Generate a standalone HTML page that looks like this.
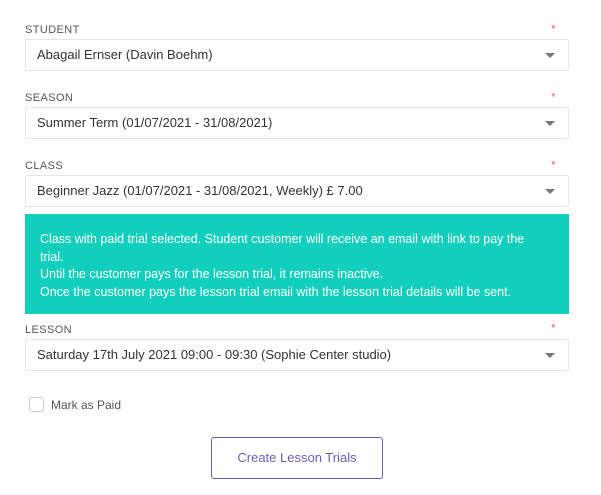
<!DOCTYPE html><html><head><style>
body{margin:0;background:#fff;font-family:"Liberation Sans",sans-serif;width:601px;height:495px;position:relative;overflow:hidden}
.lab{position:absolute;left:25px;font-size:11px;color:#555;letter-spacing:.4px}
.star{position:absolute;left:551px;color:#f06a6a;font-size:12px}
.box{position:absolute;left:25px;width:542px;height:30px;border:1px solid #e6e6e6;border-radius:2px;font-size:13px;color:#333;line-height:30px;text-indent:11px}
.box:after{content:"";position:absolute;right:13px;top:13px;border-left:5px solid transparent;border-right:5px solid transparent;border-top:5px solid #777}
.info{position:absolute;left:25px;top:214px;width:499px;height:83px;background:#12cfbd;color:#fff;font-size:12.5px;line-height:17.5px;padding:17px 30px 0 15px}
</style></head><body>
<div class="lab" style="top:24px">STUDENT</div><div class="star" style="top:22px">*</div>
<div class="box" style="top:39px">Abagail Ernser (Davin Boehm)</div>
<div class="lab" style="top:92px">SEASON</div><div class="star" style="top:90px">*</div>
<div class="box" style="top:107px">Summer Term (01/07/2021 - 31/08/2021)</div>
<div class="lab" style="top:160px">CLASS</div><div class="star" style="top:158px">*</div>
<div class="box" style="top:175px">Beginner Jazz (01/07/2021 - 31/08/2021, Weekly) £ 7.00</div>
<div class="info">Class with paid trial selected. Student customer will receive an email with link to pay the trial.<br>Until the customer pays for the lesson trial, it remains inactive.<br>Once the customer pays the lesson trial email with the lesson trial details will be sent.</div>
<div class="lab" style="top:324px">LESSON</div><div class="star" style="top:321px">*</div>
<div class="box" style="top:339px">Saturday 17th July 2021 09:00 - 09:30 (Sophie Center studio)</div>
<div style="position:absolute;left:29px;top:397px;width:13px;height:13px;border:1px solid #ccc;border-radius:3px"></div>
<div style="position:absolute;left:51px;top:398px;font-size:12px;color:#555">Mark as Paid</div>
<div style="position:absolute;left:211px;top:437px;width:170px;height:40px;border:1px solid #6f5bbf;border-radius:3px;color:#6f5bbf;font-size:13px;line-height:40px;text-align:center">Create Lesson Trials</div>
</body></html>
